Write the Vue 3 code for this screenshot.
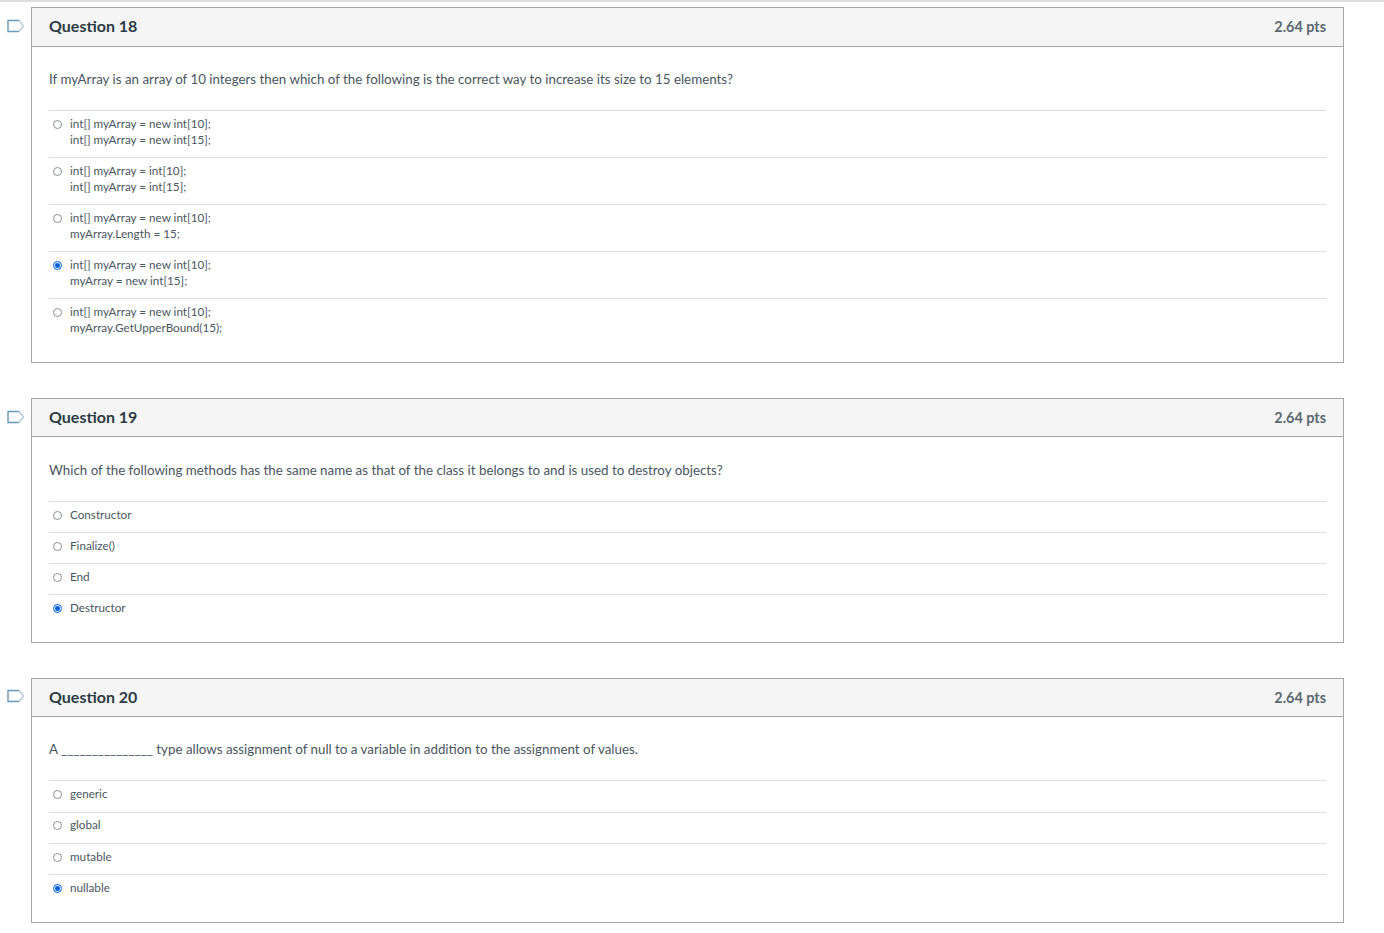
<script setup>
const questions = [
  {
    title: 'Question 18',
    text: 'If myArray is an array of 10 integers then which of the following is the correct way to increase its size to 15 elements?',
    options: [
      ['int[] myArray = new int[10];', 'int[] myArray = new int[15];'],
      ['int[] myArray = int[10];', 'int[] myArray = int[15];'],
      ['int[] myArray = new int[10];', 'myArray.Length = 15;'],
      ['int[] myArray = new int[10];', 'myArray = new int[15];'],
      ['int[] myArray = new int[10];', 'myArray.GetUpperBound(15);'],
    ],
    selected: 3,
  },
  {
    title: 'Question 19',
    text: 'Which of the following methods has the same name as that of the class it belongs to and is used to destroy objects?',
    options: [['Constructor'], ['Finalize()'], ['End'], ['Destructor']],
    selected: 3,
  },
  {
    title: 'Question 20',
    text: 'A _______________ type allows assignment of null to a variable in addition to the assignment of values.',
    options: [['generic'], ['global'], ['mutable'], ['nullable']],
    selected: 3,
  },
]
</script>

<template>
  <div class="page">
    <div class="topbar"></div>
    <div class="list">
      <section v-for="q in questions" :key="q.title" class="card">
        <svg class="flag" width="18" height="14" viewBox="0 0 18 14">
          <path d="M12 1.5H1V12.5H12" fill="none" stroke="#6a98b8" stroke-width="1.4" />
          <path d="M12 1.5L16.5 7L12 12.5" fill="none" stroke="#b0c9da" stroke-width="1.3" />
        </svg>
        <header class="head">
          <h2 class="title">{{ q.title }}</h2>
          <span class="pts">2.64 pts</span>
        </header>
        <div class="body">
          <p class="text">{{ q.text }}</p>
          <div class="options">
            <label v-for="(opt, i) in q.options" :key="i" class="option">
              <span class="radio" :class="{ on: i === q.selected }"></span>
              <span class="label">
                <span v-for="line in opt" :key="line" class="line">{{ line }}</span>
              </span>
            </label>
          </div>
        </div>
      </section>
    </div>
  </div>
</template>

<style>
body { background: #fff; }
</style>

<style scoped>
.page {
  font-family: Lato, "Open Sans", sans-serif;
  color: #2d3b45;
  font-variant-ligatures: common-ligatures;
  text-rendering: optimizeLegibility;
}
.topbar {
  height: 2px;
  background: #dcdde1;
}
.list {
  display: flex;
  flex-direction: column;
  gap: 35.35px;
  padding: 5.49px 0 0 31px;
  width: 1313px;
}
.card {
  position: relative;
  border: 1px solid #a5a5a5;
  padding-bottom: 16px;
}
.card:last-child {
  padding-bottom: 16.5px;
}
.flag {
  position: absolute;
  left: -25px;
  top: 10.5px;
}
.head {
  display: flex;
  justify-content: space-between;
  align-items: center;
  box-sizing: border-box;
  height: 38.4px;
  padding: 0 17px 2.7px;
  background: #f5f5f5;
  border-bottom: 1px solid #a5a5a5;
}
.title {
  margin: 0;
  font-size: 16px;
  font-weight: 700;
  color: #2d3b45;
}
.pts {
  margin-top: 2px;
  font-size: 14.4px;
  font-weight: 700;
  color: #5b6770;
}
.body {
  padding: 0 17px;
}
.text {
  margin: 0;
  padding-top: 24.6px;
  height: 38.7px;
  font-size: 13.35px;
  line-height: 17px;
  color: #4a5660;
}
.card:last-child .text {
  padding-top: 24px;
  height: 39px;
}
.options {
  display: flex;
  flex-direction: column;
}
.option {
  display: flex;
  gap: 8px;
  border-top: 1px solid #dcdde0;
  padding: 4.9px 0 9.6px 4px;
}
.option:nth-child(5) {
  padding-bottom: 10.2px;
}
.radio {
  flex: none;
  box-sizing: border-box;
  width: 9px;
  height: 9px;
  margin-top: 4px;
  border: 1px solid #8a8f94;
  border-radius: 50%;
  background: #fff;
}
.radio.on {
  border-color: #2a7fff;
  background: #0a5fd8;
  box-shadow: inset 0 0 0 1px #fff;
}
.label {
  display: flex;
  flex-direction: column;
  font-size: 11.7px;
  line-height: 15.75px;
  color: #4a5660;
}
</style>
